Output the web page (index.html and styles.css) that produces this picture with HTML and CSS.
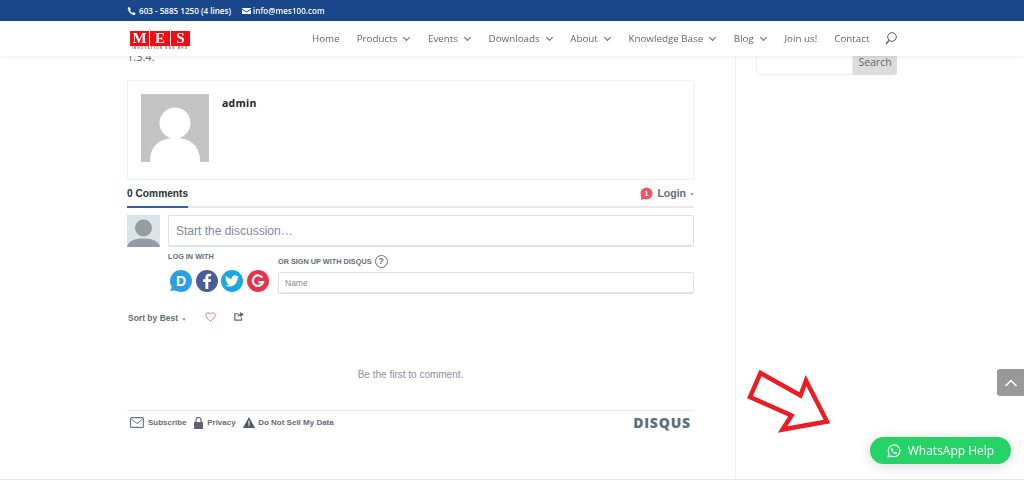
FILE: index.html
```html
<!DOCTYPE html>
<html lang="en">
<head>
<meta charset="utf-8">
<title>MES</title>
<link rel="stylesheet" href="styles.css">
</head>
<body>
<header class="site-header">
  <div class="topbar">
    <span class="contact">
      <svg class="top-icon" width="9" height="10" viewBox="0 0 24 24"><path fill="#fff" d="M6.6 1 2 3.500C1.500 10 8 21.500 20 23l3-5-6-3.500-2.500 2.500C11 15.500 8.500 12 8 9l2.500-2z"/></svg>
      603 - 5885 1250 (4 lines)
    </span>
    <span class="contact contact-mail">
      <svg class="top-icon" width="9" height="6" viewBox="0 0 16 12" preserveAspectRatio="none"><path fill="#fff" d="M0 0h16v1.500L8 7 0 1.500zM0 3.500 8 9l8-5.500V12H0z"/></svg>
      info@mes100.com
    </span>
  </div>
  <div class="navbar">
    <div class="logo">
      <div class="logo-letters"><span>M</span><span>E</span><span>S</span></div>
      <div class="logo-tag">INNOVATION SDN BHD</div>
    </div>
    <nav class="menu">
      <a class="item">Home</a>
      <a class="item has-sub">Products</a>
      <a class="item has-sub">Events</a>
      <a class="item has-sub">Downloads</a>
      <a class="item has-sub">About</a>
      <a class="item has-sub">Knowledge Base</a>
      <a class="item has-sub">Blog</a>
      <a class="item">Join us!</a>
      <a class="item">Contact</a>
      <svg class="search-icon" width="12" height="13" viewBox="0 0 12 13"><circle cx="7" cy="5" r="4.300" fill="none" stroke="#555" stroke-width="1"/><path d="M4 8.500 1 12" stroke="#555" stroke-width="1.200" fill="none"/></svg>
    </nav>
  </div>
</header>

<div class="page">
  <main class="content">
    <p class="version">1.3.4.</p>
    <section class="author">
      <svg class="author-pic" width="68" height="68" viewBox="0 0 68 68"><rect width="68" height="68" fill="#c4c4c4"/><circle cx="34" cy="29" r="15.500" fill="#fff"/><path d="M9 68c0-15 8-24 25-24s25 9 25 24z" fill="#fff"/></svg>
      <h3 class="author-name">admin</h3>
    </section>

    <section class="disqus">
      <div class="tabs">
        <span class="tab-active">0 Comments</span>
        <span class="login">
          <svg width="13" height="13" viewBox="0 0 13 13"><circle cx="6.500" cy="6.500" r="6" fill="#f05365"/><path d="M1 9v4l4-1.500z" fill="#f05365"/><text x="6.500" y="9.300" class="badge-num" text-anchor="middle">1</text></svg>
          Login <i class="caret"></i>
        </span>
      </div>

      <div class="compose">
        <svg class="me" width="33" height="32" viewBox="0 0 33 32"><rect width="33" height="32" fill="#dee3e6"/><circle cx="16.500" cy="13" r="8.500" fill="#929da8"/><path d="M0 32c1-6 8-8.500 16.500-8.500S32 26 33 32z" fill="#929da8"/></svg>
        <div class="fake-input big">Start the discussion…</div>
      </div>

      <div class="auth">
        <div class="auth-left">
          <div class="label">LOG IN WITH</div>
          <div class="socials">
            <svg width="22" height="22" viewBox="0 0 22 22"><circle cx="11" cy="11" r="11" fill="#2e9fe6"/><path d="M0 21l3-6 4 5z" fill="#2e9fe6"/><text x="11" y="16" class="social-letter" text-anchor="middle">D</text></svg>
            <svg width="22" height="22" viewBox="0 0 22 22"><circle cx="11" cy="11" r="11" fill="#4a5d99"/><path fill="#fff" d="M12.300 19v-7h2.400l.4-2.800h-2.800V7.600c0-.8.300-1.300 1.400-1.300h1.500V3.800c-.3 0-1.200-.1-2.200-.1-2.100 0-3.600 1.300-3.600 3.700v1.800H7V12h2.400v7z"/></svg>
            <svg width="22" height="22" viewBox="0 0 22 22"><circle cx="11" cy="11" r="11" fill="#1ba8e0"/><path fill="#fff" transform="translate(4 4) scale(.58)" d="M23.950 4.570a10 10 0 0 1-2.820.77 4.960 4.960 0 0 0 2.160-2.720c-.95.550-2 .96-3.130 1.190a4.920 4.920 0 0 0-8.380 4.480C7.690 8.100 4.070 6.130 1.640 3.160a4.820 4.820 0 0 0-.66 2.470c0 1.710.87 3.210 2.190 4.100a4.900 4.900 0 0 1-2.230-.62v.06a4.920 4.920 0 0 0 3.950 4.830 5 5 0 0 1-2.210.08 4.940 4.940 0 0 0 4.600 3.420A9.870 9.870 0 0 1 0 19.540a14 14 0 0 0 7.560 2.210c9.050 0 14-7.500 14-13.980 0-.21 0-.42-.02-.63a9.940 9.940 0 0 0 2.410-2.570z"/></svg>
            <svg width="22" height="22" viewBox="0 0 22 22"><circle cx="11" cy="11" r="11" fill="#e8344a"/><path d="M15.300 7.700A5.200 5.200 0 1 0 16 12.200h-4.700" fill="none" stroke="#fff" stroke-width="2.200"/></svg>
          </div>
        </div>
        <div class="auth-right">
          <div class="label signup">OR SIGN UP WITH DISQUS <span class="help">?</span></div>
          <div class="fake-input small">Name</div>
        </div>
      </div>

      <div class="sortbar">
        <span class="sort">Sort by Best <i class="caret"></i></span>
        <svg class="heart" width="11" height="10" viewBox="0 0 22 20"><path d="M11 18.500C5 13.500 1.500 10.500 1.500 6.500 1.500 3.500 3.800 1.500 6.300 1.500 8.300 1.500 10 2.500 11 4.300 12 2.500 13.700 1.500 15.700 1.500c2.500 0 4.800 2 4.800 5 0 4-3.500 7-9.500 12z" fill="none" stroke="#f2707e" stroke-width="2"/></svg>
        <svg class="share" width="10" height="9" viewBox="0 0 18 16"><path fill="none" stroke="#5d6670" stroke-width="2" d="M8 3H1.500v11.500h12V10"/><path fill="#5d6670" d="M11 0l7 4.500L11 9V6.500C8.500 6.500 6.800 7.500 6 10c0-4 2-6.500 5-6.500z"/></svg>
      </div>

      <p class="empty">Be the first to comment.</p>

      <div class="disqus-foot">
        <span class="foot-link">
          <svg width="14" height="11" viewBox="0 0 14 11"><rect x=".6" y=".6" width="12.800" height="9.800" rx="1" fill="none" stroke="#687480" stroke-width="1.100"/><path d="M1.500 2 7 6.500 12.500 2" fill="none" stroke="#687480"/></svg>
          Subscribe
        </span>
        <span class="foot-link">
          <svg width="9" height="12" viewBox="0 0 9 12"><rect y="5" width="9" height="7" fill="#5d6670"/><path d="M2 5.500V3a2.500 2.500 0 0 1 5 0v2.500" fill="none" stroke="#5d6670" stroke-width="1.200"/></svg>
          Privacy
        </span>
        <span class="foot-link foot-tight">
          <svg width="12" height="11" viewBox="0 0 12 11"><path fill="#4f5863" d="M6 0l6 11H0z"/><path fill="#fff" d="M5.500 3.500h1V8h-1zM5.500 8.600h1v1h-1z"/></svg>
          Do Not Sell My Data
        </span>
        <span class="brand">DISQUS</span>
      </div>
    </section>
  </main>

  <aside class="sidebar">
    <form class="searchform">
      <div class="search-field"></div>
      <div class="search-btn">Search</div>
    </form>
  </aside>
</div>

<svg class="arrow" width="90" height="66" viewBox="0 0 90 66"><path d="M16.500 4 56.500 26.500 62 11.500 83 52.500 38.500 60.500 47.500 46.500 6 28z" fill="#fff" stroke="#ed1c24" stroke-width="4.500" stroke-linejoin="miter" stroke-miterlimit="8"/></svg>

<a class="to-top"><svg width="14" height="8" viewBox="0 0 14 8"><path d="M1.500 7 7 1.500 12.500 7" fill="none" stroke="#fff" stroke-width="1.500"/></svg></a>

<a class="whatsapp">
  <svg width="14" height="14" viewBox="0 0 24 24"><path d="M2 22l1.500-5.500a10 10 0 1 1 4 3.900z" fill="none" stroke="#fff" stroke-width="2"/><path fill="#fff" d="M8.800 6.800c-.5 0-1.600 1-1.600 2.500 0 3 4.200 7.500 7.800 7.800 1.500 0 2.600-1.100 2.600-2 0-.5-.1-.7-.4-.8l-2.100-1c-.3-.1-.5 0-.7.200l-.8 1c-.2.200-.4.200-.7.100-1.500-.6-2.800-1.800-3.500-3.200-.1-.3 0-.4.100-.6l.6-.8c.1-.2.100-.4 0-.6l-.9-2.200c-.1-.3-.3-.4-.4-.4z"/></svg>
  WhatsApp Help
</a>
</body>
</html>
```
FILE: styles.css
```css
* { box-sizing: border-box; }
html, body { margin: 0; padding: 0; height: 480px; overflow: hidden; background: #fff; }
body { font-family: "Open Sans", sans-serif; color: #666; }

.site-header { position: fixed; top: 0; left: 0; width: 100%; z-index: 5; background: #fff; box-shadow: 0 1px 4px rgba(0,0,0,.08); }
.topbar { height: 21px; background: #18478b; padding-left: 127px; display: flex; align-items: center; color: #fff; font-size: 8.100px; font-weight: 600; }
.contact { display: flex; align-items: center; gap: 3px; }
.contact-mail { margin-left: 11px; gap: 2px; }
.top-icon { flex: none; }
.navbar { height: 35px; display: flex; align-items: center; padding-left: 130px; }
.logo { width: 60px; margin-top: 3px; }
.logo-letters { display: flex; gap: 1px; height: 15px; }
.logo-letters span { flex: 1; background: #f00c12; color: #fff; font: bold 15px/15px "Liberation Serif", serif; text-align: center; }
.logo-tag { font: bold 3px/4px "Liberation Sans", sans-serif; color: #666; text-align: center; letter-spacing: 1.300px; white-space: nowrap; }
.menu { display: flex; align-items: center; margin-left: 122px; font-size: 9.800px; font-weight: 500; color: #666; gap: 17px; }
.item { display: flex; align-items: center; white-space: nowrap; }
.has-sub::after { content: ""; width: 4px; height: 4px; margin: -2px 1.600px 0 7px; border-right: 1px solid #666; border-bottom: 1px solid #666; transform: rotate(45deg); }
.search-icon { margin-left: -1px; }

.page { display: flex; height: 480px; padding-left: 127px; border-bottom: 1px solid #e6e7ee; }
.content { width: 567px; margin-right: 41px; padding-top: 49px; }
.version { margin: 0 0 15px; font-size: 11px; line-height: 16px; color: #666; }
.author { height: 100px; border: 1px solid #f1f1f1; padding: 13px; display: flex; }
.author-pic { flex: none; }
.author-name { margin: 1px 0 0 13px; font-size: 10.500px; line-height: 16px; font-weight: 700; color: #222; letter-spacing: .25px; }

.disqus { font-family: "Liberation Sans", Arial, sans-serif; }
.tabs { height: 28px; border-bottom: 2px solid #e7e9ee; display: flex; justify-content: space-between; align-items: flex-end; }
.tab-active { height: 28px; margin-bottom: -2px; padding: 7px 0 0; width: 61px; border-bottom: 2px solid #2e5fa8; font-size: 10.200px; line-height: 13px; font-weight: 700; color: #2a2e2e; white-space: nowrap; }
.login { display: flex; align-items: center; gap: 4px; height: 26px; font-size: 10.500px; font-weight: 700; color: #656c7a; }
.badge-num { font: bold 8px "Liberation Sans", sans-serif; fill: #fff; }
.caret { display: inline-block; width: 0; height: 0; border-left: 2.500px solid transparent; border-right: 2.500px solid transparent; border-top: 3px solid #a5abb3; margin-top: 3px; }

.compose { display: flex; gap: 8px; margin-top: 7px; }
.me { flex: none; }
.fake-input { border: 1px solid #dfe2e9; border-bottom-width: 2px; border-radius: 2px; background: #fff; color: #7f8b97; display: flex; align-items: center; }
.fake-input.big { flex: 1; height: 32px; padding-left: 7px; font-size: 12px; }
.fake-input.small { height: 22px; padding-left: 6px; font-size: 8.500px; width: 416px; margin-top: 3px; }

.auth { display: flex; margin-left: 41px; margin-top: 5px; }
.auth-left { width: 110px; }
.label { font-size: 7.300px; font-weight: 700; color: #656c7a; line-height: 10px; white-space: nowrap; }
.socials { display: flex; gap: 3.500px; margin: 8px 0 0 2px; }
.signup { display: flex; align-items: center; gap: 3px; margin-top: 2px; height: 15px; }
.help { width: 13px; height: 13px; border: 1px solid #656c7a; border-radius: 50%; text-align: center; font-size: 9px; line-height: 11px; font-weight: 700; }
.social-letter { font: bold 14px "Liberation Sans", sans-serif; fill: #fff; }

.sortbar { display: flex; align-items: center; height: 16px; margin-top: 16px; font-size: 8.500px; font-weight: 700; color: #656c7a; }
.sort { display: flex; align-items: center; gap: 4px; width: 78px; padding-left: 1px; }
.heart { margin-right: 18px; margin-top: -2px; }
.share { margin-top: -4px; }

.empty { margin: 42px 0 0; text-align: center; font-size: 10px; line-height: 14px; color: #8b929b; }
.disqus-foot { display: flex; align-items: center; gap: 7.500px; height: 24px; margin-top: 28px; border-top: 1px solid #e7e9ee; padding: 0 3px 0 3px; font-size: 8px; font-weight: 700; color: #656c7a; }
.foot-link { display: flex; align-items: center; gap: 4px; }
.foot-tight { gap: 3px; }
.brand { margin-left: auto; font-family: "Open Sans", sans-serif; font-size: 14px; font-weight: 800; color: #5d7080; letter-spacing: .8px; }

.sidebar { width: 162px; border-left: 1px solid #f0f0f2; padding: 35px 0 0 20px; height: 479px; }
.searchform { display: flex; height: 40px; width: 141px; }
.search-field { width: 97px; border: 1px solid #eee; border-radius: 3px 0 0 3px; }
.search-btn { width: 44px; background: #ddd; border-radius: 0 3px 3px 0; padding-top: 20px; text-align: center; font-size: 10.500px; line-height: 14px; color: #666; }

.arrow { position: fixed; left: 744px; top: 369px; }
.to-top { position: fixed; right: 0; top: 369px; width: 27px; height: 27px; background: #999; border-radius: 3px 0 0 3px; display: flex; align-items: center; justify-content: center; }
.whatsapp { position: fixed; left: 870px; top: 437px; width: 141px; height: 27px; background: #25d366; border-radius: 14px; color: #fff; display: flex; align-items: center; justify-content: center; gap: 7px; font-size: 12px; box-shadow: 0 2px 14px rgba(0,0,0,.15); }
```
